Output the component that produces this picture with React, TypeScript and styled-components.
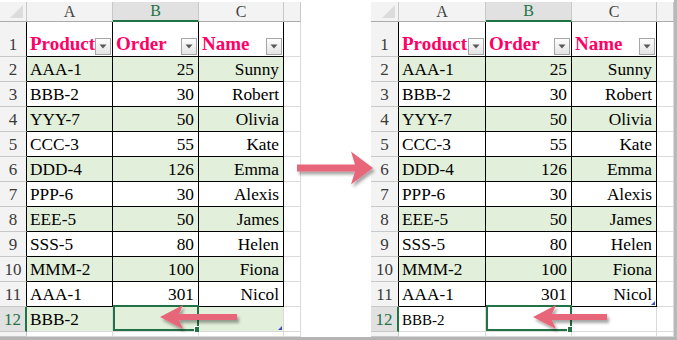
import styled, { createGlobalStyle } from "styled-components";

const GREEN = "#217346";
const GRID = "#dadada";
const HEAD_LINE = "#c8c8c8";

const GlobalStyle = createGlobalStyle`
  body {
    margin: 0;
    background: #ffffff;
    font-family: "Liberation Serif", "Times New Roman", serif;
  }
`;

const Frame = styled.div`
  position: relative;
  width: 677px;
  height: 340px;
  box-sizing: border-box;
  display: flex;
  gap: 70px;
  border-right: 3px solid #b9b9b9;
  border-bottom: 3px solid #b4b4b4;
  overflow: hidden;
`;

const Sheet = styled.div<{ $head: number; $colA: number }>`
  display: grid;
  grid-template-columns: ${(p) => p.$head}px ${(p) => p.$colA}px 86px 85px 17px;
  grid-template-rows: 20px 35px repeat(11, 25px) 1fr;
  padding-top: 2px;
  height: 100%;
  box-sizing: border-box;
`;

const Corner = styled.div`
  background: #f3f3f3;
  border-right: 1px solid ${HEAD_LINE};
  border-bottom: 1px solid #ababab;
  display: flex;
  justify-content: flex-end;
  align-items: flex-end;
  padding: 0 3px 3px 0;
`;

const ColHeader = styled.div<{ $active?: boolean }>`
  background: ${(p) => (p.$active ? "#e1e1e1" : "#f3f3f3")};
  color: ${(p) => (p.$active ? GREEN : "#444")};
  border-right: 1px solid ${HEAD_LINE};
  border-bottom: ${(p) => (p.$active ? `2px solid ${GREEN}` : "1px solid #ababab")};
  display: flex;
  justify-content: center;
  align-items: center;
  font-size: 16px;
`;

const RowHeader = styled.div<{ $edge: "table" | "active" | "plain" }>`
  background: ${(p) => (p.$edge === "active" ? "#e1e1e1" : "#f3f3f3")};
  color: ${(p) => (p.$edge === "active" ? GREEN : "#3a3a3a")};
  border-bottom: 1px solid ${HEAD_LINE};
  border-right: ${(p) =>
    p.$edge === "active"
      ? `2px solid ${GREEN}`
      : p.$edge === "table"
      ? "1px solid #000"
      : `1px solid ${HEAD_LINE}`};
  display: flex;
  justify-content: center;
  align-items: flex-end;
  font-size: 17px;
  line-height: 22px;
`;

const Cell = styled.div<{
  $fill?: boolean;
  $boxed?: boolean;
  $right?: boolean;
  $small?: boolean;
}>`
  position: relative;
  background: ${(p) => (p.$fill ? "#e2efda" : "#ffffff")};
  border-right: 1px solid ${(p) => (p.$boxed ? "#000" : GRID)};
  border-bottom: 1px solid ${(p) => (p.$boxed ? "#000" : GRID)};
  display: flex;
  align-items: flex-end;
  justify-content: ${(p) => (p.$right ? "flex-end" : "flex-start")};
  padding: 0 4px 0 3px;
  font-size: ${(p) => (p.$small ? "15px" : "17.3px")};
  line-height: 22px;
  color: #000;
  white-space: nowrap;
`;

const TitleCell = styled(Cell)`
  justify-content: space-between;
  padding: 0 1px 0 3px;
`;

const Title = styled.span`
  color: #ff0066;
  font-weight: bold;
  font-size: 19px;
  line-height: 24px;
`;

const FilterButton = styled.span`
  width: 16px;
  height: 17px;
  box-sizing: border-box;
  margin-bottom: 1px;
  border: 1px solid #a6a6a6;
  background: linear-gradient(#fdfdfd, #e4e4e4);
  display: flex;
  align-items: center;
  justify-content: center;
  flex-shrink: 0;
`;

const Selection = styled.div`
  position: absolute;
  top: -2px;
  left: 0;
  right: -1px;
  bottom: 0;
  border: 2px solid ${GREEN};
`;

const FillHandle = styled.div`
  position: absolute;
  right: -4px;
  bottom: -4px;
  width: 5px;
  height: 5px;
  background: ${GREEN};
  border: 1px solid #ffffff;
`;

const TableCorner = styled.div`
  position: absolute;
  right: 1px;
  bottom: 1px;
  width: 0;
  height: 0;
  border-left: 4px solid transparent;
  border-bottom: 4px solid #3f51b5;
`;

const Arrows = styled.svg`
  position: absolute;
  left: 0;
  top: 0;
  pointer-events: none;
`;

interface IRow {
  product: string;
  order: number;
  name: string;
}

const data: IRow[] = [
  { product: "AAA-1", order: 25, name: "Sunny" },
  { product: "BBB-2", order: 30, name: "Robert" },
  { product: "YYY-7", order: 50, name: "Olivia" },
  { product: "CCC-3", order: 55, name: "Kate" },
  { product: "DDD-4", order: 126, name: "Emma" },
  { product: "PPP-6", order: 30, name: "Alexis" },
  { product: "EEE-5", order: 50, name: "James" },
  { product: "SSS-5", order: 80, name: "Helen" },
  { product: "MMM-2", order: 100, name: "Fiona" },
  { product: "AAA-1", order: 301, name: "Nicol" },
];

function Filter() {
  return (
    <FilterButton>
      <svg width="8" height="5" viewBox="0 0 8 5">
        <polygon points="0.5,0.5 7.5,0.5 4,4.5" fill="#595959" />
      </svg>
    </FilterButton>
  );
}

// tip: the point, tail: end of shaft
function arrowPoints(tipX: number, y: number, tailX: number, shaft: number, head: number, len: number) {
  const dir = tailX > tipX ? 1 : -1;
  const bx = tipX + dir * len;
  const nx = bx - dir * 4;
  return [
    [tipX, y],
    [bx, y - head],
    [nx, y - shaft],
    [tailX, y - shaft],
    [tailX, y + shaft],
    [nx, y + shaft],
    [bx, y + head],
  ]
    .map((pt) => pt.join(","))
    .join(" ");
}

interface ISheetProps {
  after?: boolean;
  head: number;
  colA: number;
}

function Spreadsheet({ after, head, colA }: ISheetProps) {
  return (
    <Sheet $head={head} $colA={colA}>
      <Corner>
        <svg width="13" height="13" viewBox="0 0 13 13">
          <polygon points="13,0 13,13 0,13" fill="#dcdcdc" />
        </svg>
      </Corner>
      <ColHeader>A</ColHeader>
      <ColHeader $active>B</ColHeader>
      <ColHeader>C</ColHeader>
      <ColHeader />

      <RowHeader $edge="table">1</RowHeader>
      <TitleCell $boxed>
        <Title>Product</Title>
        <Filter />
      </TitleCell>
      <TitleCell $boxed>
        <Title>Order</Title>
        <Filter />
      </TitleCell>
      <TitleCell $boxed>
        <Title>Name</Title>
        <Filter />
      </TitleCell>
      <Cell />

      {data.map((row, i) => {
        const fill = i % 2 === 0;
        const last = i === data.length - 1;
        return [
          <RowHeader key={`h${i}`} $edge="table">
            {i + 2}
          </RowHeader>,
          <Cell key={`a${i}`} $boxed $fill={fill}>
            {row.product}
          </Cell>,
          <Cell key={`b${i}`} $boxed $fill={fill} $right>
            {row.order}
          </Cell>,
          <Cell key={`c${i}`} $boxed $fill={fill} $right>
            {row.name}
            {after && last && <TableCorner />}
          </Cell>,
          <Cell key={`d${i}`} />,
        ];
      })}

      <RowHeader $edge="active">12</RowHeader>
      <Cell $fill={!after} $small={after}>
        BBB-2
      </Cell>
      <Cell $fill={!after}>
        <Selection>
          <FillHandle />
        </Selection>
      </Cell>
      <Cell $fill={!after}>{!after && <TableCorner />}</Cell>
      <Cell />

      <RowHeader $edge="plain" />
      <Cell />
      <Cell />
      <Cell />
      <Cell />
    </Sheet>
  );
}

function App() {
  return (
    <>
      <GlobalStyle />
      <Frame>
        <Spreadsheet head={27} colA={86} />
        <Spreadsheet after head={28} colA={87} />
        <Arrows width="677" height="340">
          <defs>
            <filter id="arrowShadow" x="-10%" y="-50%" width="130%" height="220%">
              <feDropShadow dx="2" dy="3" stdDeviation="1.6" floodColor="#000" floodOpacity="0.35" />
            </filter>
          </defs>
          <g fill="#e8667a" filter="url(#arrowShadow)">
            <polygon points={arrowPoints(160, 317, 237, 3, 12, 23)} />
            <polygon points={arrowPoints(533, 317, 607, 3, 12, 23)} />
            <polygon points={arrowPoints(373, 168, 297, 3.5, 16.5, 22)} />
          </g>
        </Arrows>
      </Frame>
    </>
  );
}

export default App;
